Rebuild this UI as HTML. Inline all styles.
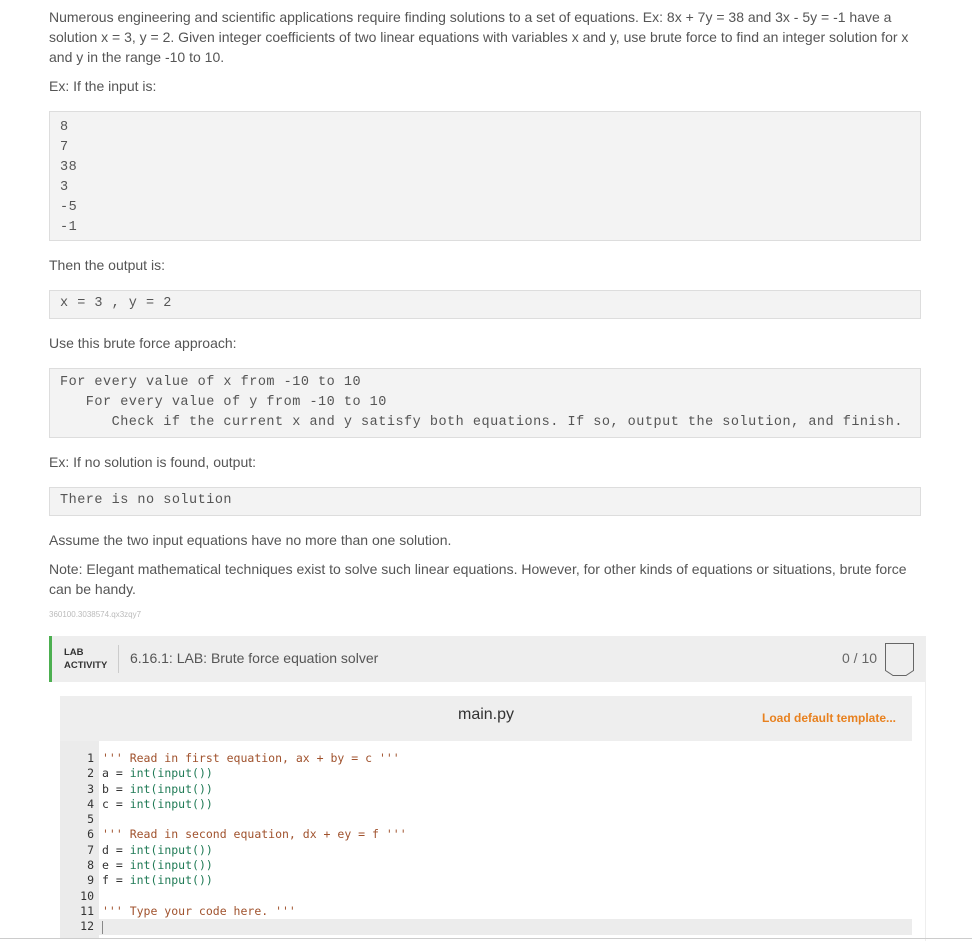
<!DOCTYPE html>
<html><head><style>
body{margin:0;background:#fff;width:972px;height:941px;overflow:hidden;position:relative;font-family:"Liberation Sans",sans-serif;color:#555;}
.t{position:absolute;left:49px;font-size:14px;line-height:20px;white-space:nowrap;}
.box{position:absolute;left:49px;width:870px;background:#f3f3f3;border:1px solid #ddd;font-family:"Liberation Mono",monospace;font-size:13.5px;letter-spacing:0.5px;color:#555;}
.box div{position:absolute;left:10px;line-height:20px;white-space:pre;}
.cl{position:absolute;white-space:pre;font-family:"DejaVu Sans Mono",monospace;font-size:11.5px;line-height:15.3px;color:#333;}
.s{color:#a0522d}.g{color:#1f7a55}
</style></head><body>
<div class="t" style="top:7px;white-space:normal;width:875px">Numerous engineering and scientific applications require finding solutions to a set of equations. Ex: 8x + 7y = 38 and 3x - 5y = -1 have a solution x = 3, y = 2. Given integer coefficients of two linear equations with variables x and y, use brute force to find an integer solution for x and y in the range -10 to 10.</div>
<div class="t" style="top:76px">Ex: If the input is:</div>
<div class="box" style="top:111px;height:128px">
<div style="top:6px">8</div><div style="top:26px">7</div><div style="top:46px">38</div><div style="top:66px">3</div><div style="top:86px">-5</div><div style="top:106px">-1</div></div>
<div class="t" style="top:255px">Then the output is:</div>
<div class="box" style="top:290px;height:27px"><div style="top:3px">x = 3 , y = 2</div></div>
<div class="t" style="top:333px">Use this brute force approach:</div>
<div class="box" style="top:368px;height:68px">
<div style="top:4px">For every value of x from -10 to 10</div>
<div style="top:24px">   For every value of y from -10 to 10</div>
<div style="top:44px">      Check if the current x and y satisfy both equations. If so, output the solution, and finish.</div></div>
<div class="t" style="top:452px">Ex: If no solution is found, output:</div>
<div class="box" style="top:487px;height:27px"><div style="top:3px">There is no solution</div></div>
<div class="t" style="top:530px">Assume the two input equations have no more than one solution.</div>
<div class="t" style="top:559px;white-space:normal;width:875px">Note: Elegant mathematical techniques exist to solve such linear equations. However, for other kinds of equations or situations, brute force can be handy.</div>
<div class="t" style="top:609px;font-size:8px;line-height:12px;color:#bbb">360100.3038574.qx3zqy7</div>

<div style="position:absolute;left:49px;top:636px;width:876px;height:305px;background:#fff;border-right:1px solid #eee"></div>
<div style="position:absolute;left:49px;top:636px;width:873px;height:46px;background:#eeeeee;border-left:3px solid #4caf50"></div>
<div style="position:absolute;left:64px;top:646px;font-size:9.5px;font-weight:bold;color:#333;line-height:13px">LAB<br>ACTIVITY</div>
<div style="position:absolute;left:118px;top:645px;width:1px;height:28px;background:#ccc"></div>
<div style="position:absolute;left:130px;top:650px;font-size:14px;color:#555">6.16.1: LAB: Brute force equation solver</div>
<div style="position:absolute;left:842px;top:650px;font-size:14px;color:#666">0 / 10</div>
<svg style="position:absolute;left:884px;top:642px" width="32" height="36"><path d="M1.5 1.5H29.5V28.5L22 33.5H9L1.5 28.5Z" fill="none" stroke="#666" stroke-width="1"/></svg>

<div style="position:absolute;left:60px;top:696px;width:852px;height:45px;background:#eeeeee"></div>
<div style="position:absolute;left:458px;top:706px;font-size:16px;color:#333">main.py</div>
<div style="position:absolute;left:762px;top:711px;font-size:12px;font-weight:bold;color:#e8811f">Load default template...</div>
<div style="position:absolute;left:60px;top:741px;width:39px;height:197px;background:#ebebeb"></div>
<div style="position:absolute;left:99px;top:919px;width:813px;height:16px;background:#ececec"></div>
<div style="position:absolute;left:102px;top:921px;width:1px;height:13px;background:#888"></div>
<div style="position:absolute;left:0;top:938px;width:972px;height:1px;background:#ccc"></div>
<div class="cl" style="left:74px;top:751px;text-align:right;width:20px"> 1
 2
 3
 4
 5
 6
 7
 8
 9
10
11
12</div>
<div class="cl" style="left:102px;top:751px"><span class="s">''' Read in first equation, ax + by = c '''</span>
a = <span class="g">int(input())</span>
b = <span class="g">int(input())</span>
c = <span class="g">int(input())</span>

<span class="s">''' Read in second equation, dx + ey = f '''</span>
d = <span class="g">int(input())</span>
e = <span class="g">int(input())</span>
f = <span class="g">int(input())</span>

<span class="s">''' Type your code here. '''</span>
</div>
</body></html>
